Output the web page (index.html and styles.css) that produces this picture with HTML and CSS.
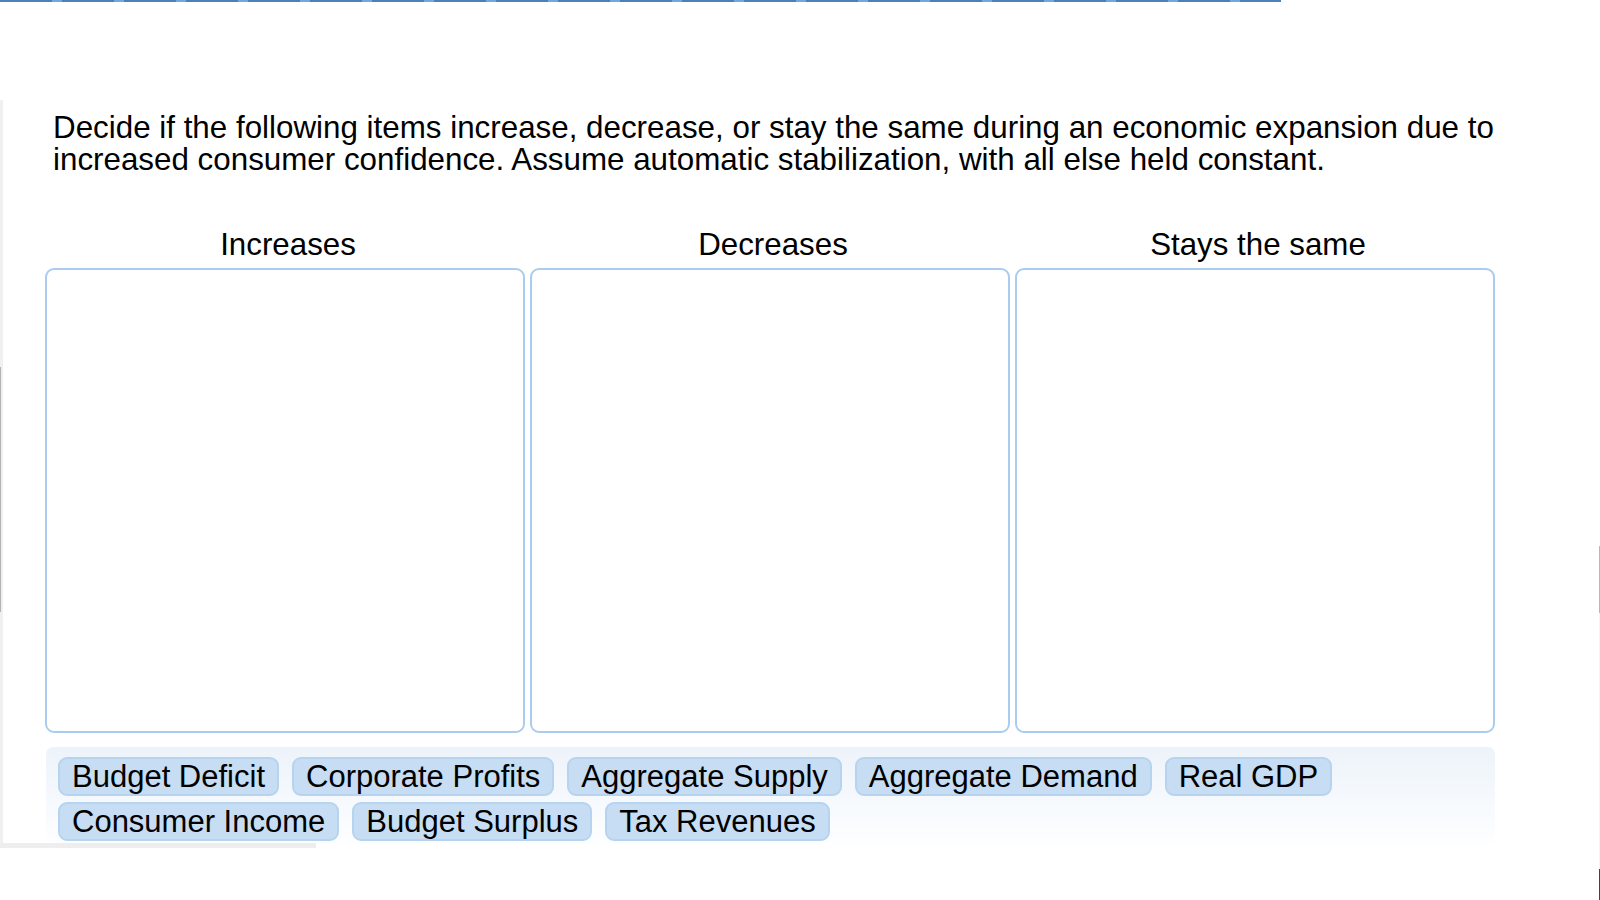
FILE: index.html
```html
<!DOCTYPE html>
<html lang="en">
<head>
<meta charset="utf-8">
<title>Automatic stabilizers sorting</title>
<link rel="stylesheet" href="styles.css">
</head>
<body>
  <div class="main">
    <div class="topline"></div>
    <div class="sheet">
      <div class="rail-left"></div>
      <div class="content">
        <p class="question">Decide if the following items increase, decrease, or stay the same during an economic expansion due to increased consumer confidence. Assume automatic stabilization, with all else held constant.</p>
        <div class="columns">
          <div class="column">
            <div class="col-title">Increases</div>
            <div class="dropzone"></div>
          </div>
          <div class="column">
            <div class="col-title">Decreases</div>
            <div class="dropzone"></div>
          </div>
          <div class="column">
            <div class="col-title">Stays the same</div>
            <div class="dropzone"></div>
          </div>
        </div>
        <div class="tray">
          <span class="token">Budget Deficit</span>
          <span class="token">Corporate Profits</span>
          <span class="token">Aggregate Supply</span>
          <span class="token">Aggregate Demand</span>
          <span class="token">Real GDP</span>
          <span class="token">Consumer Income</span>
          <span class="token">Budget Surplus</span>
          <span class="token">Tax Revenues</span>
        </div>
      </div>
    </div>
    <div class="sheet-foot"></div>
  </div>
  <div class="rail-right"></div>
</body>
</html>
```

FILE: styles.css
```css
html, body {
  margin: 0;
  padding: 0;
  background: #ffffff;
}

body {
  width: 1600px;
  height: 900px;
  overflow: hidden;
  display: flex;
  font-family: "Liberation Sans", Arial, sans-serif;
  color: #000;
}

.main {
  flex: 1;
  display: flex;
  flex-direction: column;
}

.topline {
  width: 1281px;
  height: 2px;
  background: repeating-linear-gradient(to right, #4a82b8 0, #4a82b8 52px, #6fa8dd 52px, #6fa8dd 62px);
}

.sheet {
  margin-top: 98px;
  display: flex;
}

.rail-left {
  width: 3px;
  flex: none;
  background:
    linear-gradient(to bottom, transparent 267px, #b3b3b3 267px, #b3b3b3 512px, transparent 512px) no-repeat 0 0 / 1px 100%,
    #f0f0f0;
}

.content {
  width: 1450px;
  padding-left: 42px;
  padding-top: 12px;
}

.question {
  margin: 0;
  padding: 0 0 0 8px;
  font-size: 31.35px;
  line-height: 31.5px;
  width: 1445px;
}

.columns {
  display: flex;
  gap: 5px;
  margin-top: 52px;
}

.column {
  flex: 1;
  display: flex;
  flex-direction: column;
}

.col-title {
  text-align: center;
  font-size: 31.3px;
  line-height: 35px;
  height: 35px;
  padding-left: 6px;
  margin-bottom: 6px;
}

.dropzone {
  height: 461px;
  border: 2px solid #aacdef;
  border-radius: 9px;
  background: #fff;
}

.tray {
  margin-top: 14px;
  margin-left: 1px;
  padding: 10px 12px 2px 12px;
  border-radius: 7px;
  background: linear-gradient(to bottom, #edf3fa 0%, #f8fbfe 70%, #fdfeff 100%);
  display: flex;
  flex-wrap: wrap;
  column-gap: 13px;
  row-gap: 6px;
}

.token {
  display: inline-block;
  font-size: 31px;
  line-height: 35px;
  padding: 0 12px;
  border: 2px solid #b6d4f0;
  border-radius: 9px;
  background: #c6ddf3;
  white-space: nowrap;
}

.sheet-foot {
  width: 316px;
  height: 5px;
  background: #eeeeee;
}

.rail-right {
  width: 1px;
  flex: none;
  height: 900px;
  background: linear-gradient(to bottom,
    transparent 0, transparent 546px,
    #b8b8b8 546px, #b8b8b8 613px,
    #f4f4f4 613px, #f4f4f4 869px,
    #2a4862 869px, #2a4862 900px);
}
```
